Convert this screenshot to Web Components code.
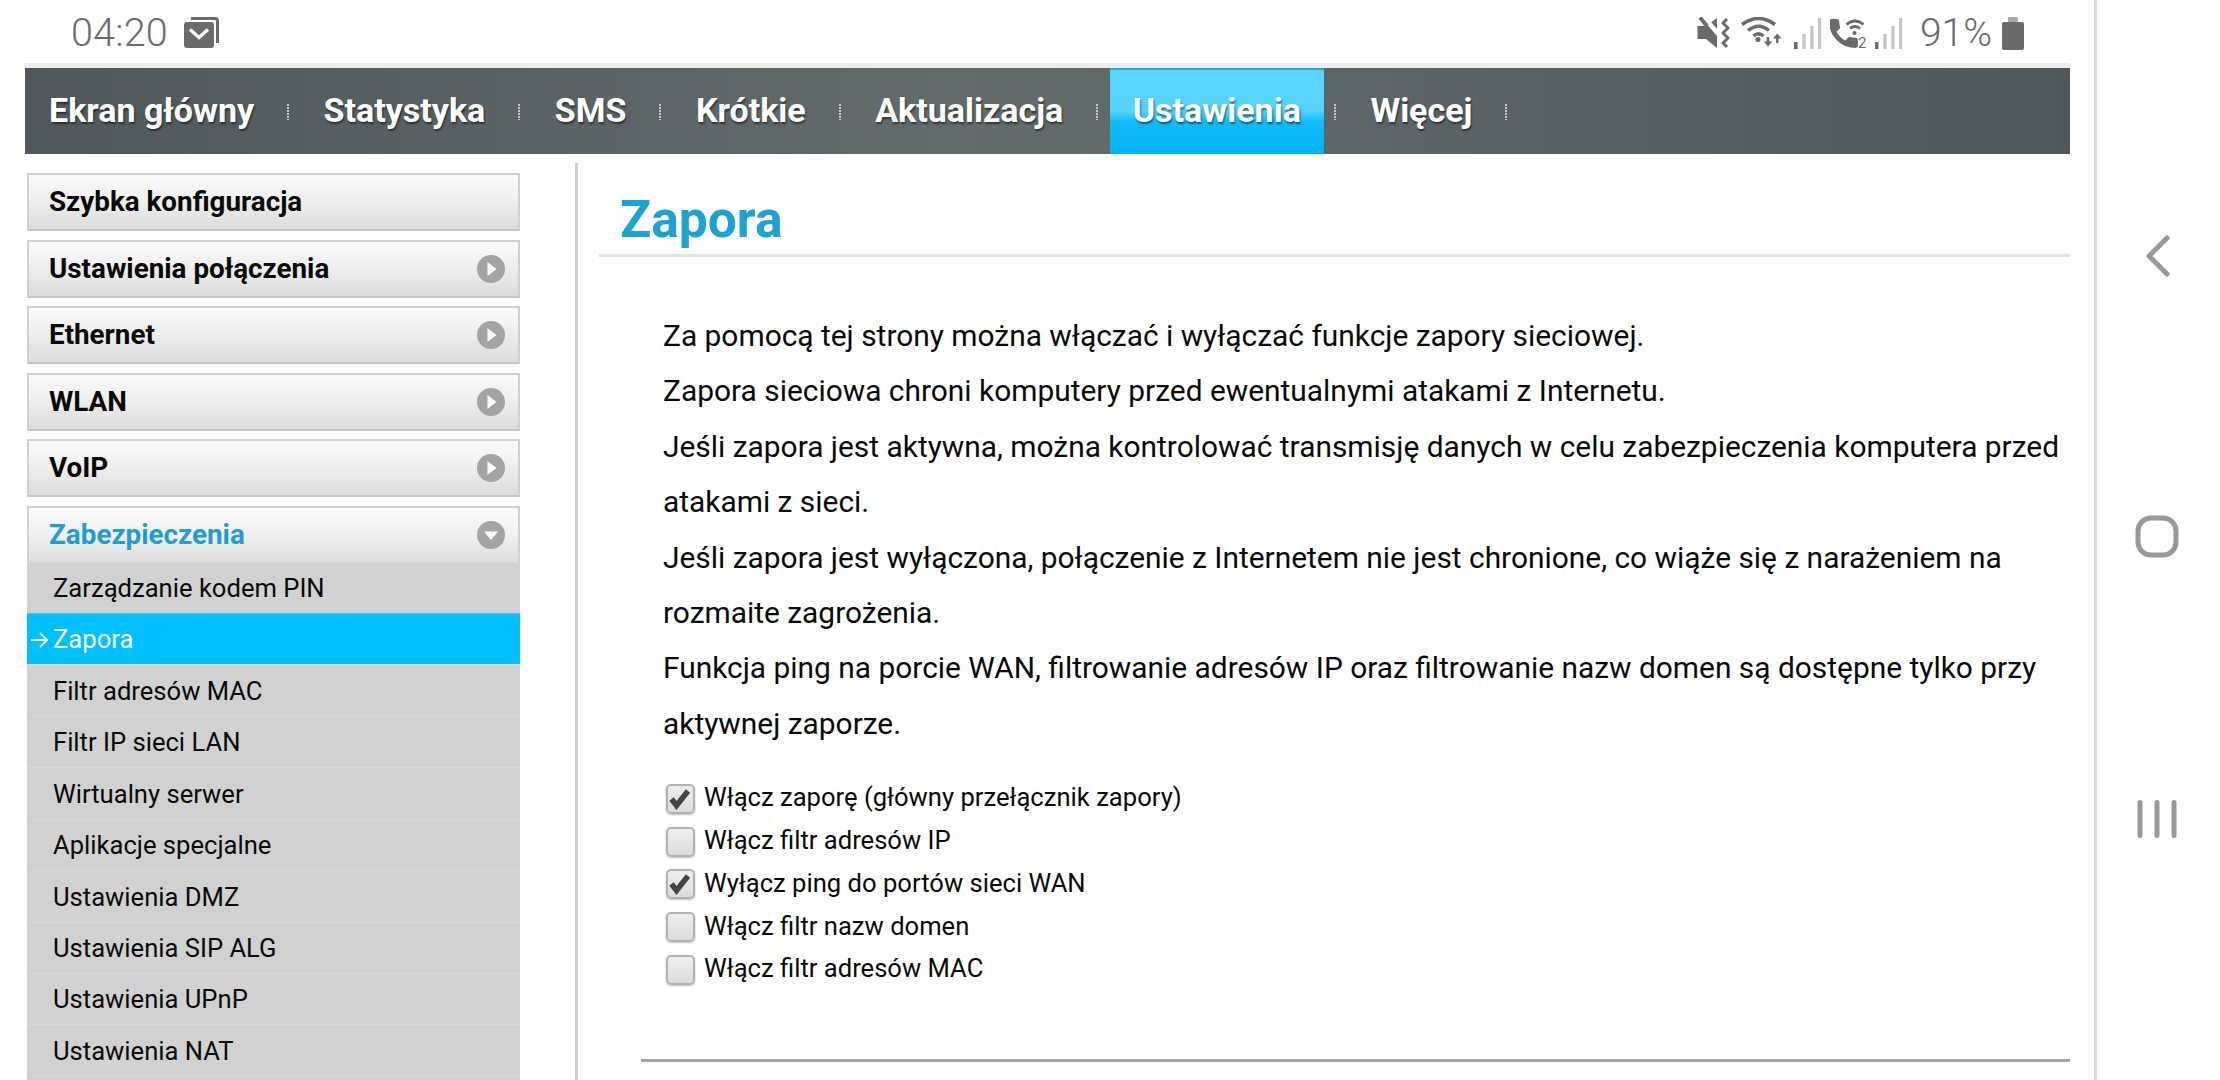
<!DOCTYPE html>
<html lang="pl"><head><meta charset="utf-8"><title>Zapora</title>
<style>
html,body{margin:0;padding:0;background:#fff;overflow:hidden}
body{font-family:Roboto,"Liberation Sans",sans-serif;width:2220px;height:1080px}
</style></head><body>
<phone-shell>
  <status-bar slot="status"></status-bar>
  <top-nav slot="nav">
    <nav-item>Ekran główny</nav-item>
    <nav-item>Statystyka</nav-item>
    <nav-item>SMS</nav-item>
    <nav-item>Krótkie</nav-item>
    <nav-item>Aktualizacja</nav-item>
    <nav-item active>Ustawienia</nav-item>
    <nav-item>Więcej</nav-item>
  </top-nav>
  <side-menu slot="side">
    <menu-button state="none">Szybka konfiguracja</menu-button>
    <menu-button>Ustawienia połączenia</menu-button>
    <menu-button>Ethernet</menu-button>
    <menu-button>WLAN</menu-button>
    <menu-button>VoIP</menu-button>
    <menu-group>
      <menu-button state="open">Zabezpieczenia</menu-button>
      <sub-item>Zarządzanie kodem PIN</sub-item>
      <sub-item active>Zapora</sub-item>
      <sub-item>Filtr adresów MAC</sub-item>
      <sub-item>Filtr IP sieci LAN</sub-item>
      <sub-item>Wirtualny serwer</sub-item>
      <sub-item>Aplikacje specjalne</sub-item>
      <sub-item>Ustawienia DMZ</sub-item>
      <sub-item>Ustawienia SIP ALG</sub-item>
      <sub-item>Ustawienia UPnP</sub-item>
      <sub-item>Ustawienia NAT</sub-item>
      <sub-item></sub-item>
    </menu-group>
  </side-menu>
  <firewall-panel slot="main">
    <span slot="title">Zapora</span>
    <p>Za pomocą tej strony można włączać i wyłączać funkcje zapory sieciowej.</p>
    <p>Zapora sieciowa chroni komputery przed ewentualnymi atakami z Internetu.</p>
    <p>Jeśli zapora jest aktywna, można kontrolować transmisję danych w celu zabezpieczenia komputera przed atakami z sieci.</p>
    <p>Jeśli zapora jest wyłączona, połączenie z Internetem nie jest chronione, co wiąże się z narażeniem na rozmaite zagrożenia.</p>
    <p>Funkcja ping na porcie WAN, filtrowanie adresów IP oraz filtrowanie nazw domen są dostępne tylko przy aktywnej zaporze.</p>
    <check-row slot="checks" checked>Włącz zaporę (główny przełącznik zapory)</check-row>
    <check-row slot="checks">Włącz filtr adresów IP</check-row>
    <check-row slot="checks" checked>Wyłącz ping do portów sieci WAN</check-row>
    <check-row slot="checks">Włącz filtr nazw domen</check-row>
    <check-row slot="checks">Włącz filtr adresów MAC</check-row>
  </firewall-panel>
  <nav-rail slot="rail"></nav-rail>
</phone-shell>
<script>
function def(name, html, setup){
  customElements.define(name, class extends HTMLElement{
    constructor(){super();const r=this.attachShadow({mode:'open'});r.innerHTML=html;}
    connectedCallback(){ if(setup) setup(this); }
  });
}
def('phone-shell',`<style>
:host{display:flex;width:2220px;height:1080px;overflow:hidden;background:#fff}
.left{width:2094px;flex:none;box-sizing:border-box;padding-left:25px;display:flex;flex-direction:column;height:1080px}
.inner{width:2045px;display:flex;flex:1;min-height:0;margin-top:9px}
.sidecol{width:553px;flex:none;box-sizing:border-box;border-right:3px solid #cfcfcf;padding-top:10px;overflow:hidden}
.maincol{flex:1;min-width:0}
.railcol{flex:1;border-left:3px solid #dcdcdc}
</style>
<div class="left"><slot name="status"></slot><slot name="nav"></slot>
<div class="inner"><div class="sidecol"><slot name="side"></slot></div><div class="maincol"><slot name="main"></slot></div></div></div>
<div class="railcol"><slot name="rail"></slot></div>`);

def('status-bar',`<style>
:host{display:flex;align-items:center;height:63px;box-sizing:border-box;padding:3px 0 0 46px;color:#6b6b6b}
.t{font:300 39.500px/1 Roboto,sans-serif;letter-spacing:.2px;margin-right:15px}
.sp{flex:1}
svg{display:block;flex:none}
.pct{font:300 39px/1 Roboto,sans-serif;margin:0 10px 0 17px}
.r{display:flex;align-items:center;padding-right:70px}
</style>
<span class="t">04:20</span>
<svg width="36" height="32" viewBox="0 0 36 32"><path d="M8 1.500h24a2.500 2.500 0 0 1 2.500 2.500v22" fill="none" stroke="#6b6b6b" stroke-width="3"/><rect x="1" y="5" width="30" height="26" rx="3" fill="#6b6b6b"/><path d="M7 12.500l9 8 9-8" fill="none" stroke="#fff" stroke-width="3.400"/></svg>
<span class="sp"></span>
<div class="r">
<svg width="33" height="33" viewBox="0 0 33 33" style="margin-right:11px"><path d="M.5 9H9L20 1V31L9 22H.5z" fill="#6b6b6b"/><path d="M6-1L23 19" stroke="#fff" stroke-width="4.500"/><path d="M3 .5L10 9" stroke="#6b6b6b" stroke-width="4"/><path d="M30 2l-4 4 5 5-5 5 5 5-5 5 4 4" fill="none" stroke="#6b6b6b" stroke-width="3" stroke-linejoin="round"/></svg>
<svg width="44" height="32" viewBox="0 0 44 32" style="margin-right:9px"><path d="M1 7.500Q17.500-4.500 34 7.500M7 13.500Q17.500 5 28 13.500M12.500 19Q17.500 14.500 22.500 19" fill="none" stroke="#6b6b6b" stroke-width="3.500"/><circle cx="17" cy="22.500" r="2.500" fill="#6b6b6b"/><path d="M27 20v5" stroke="#6b6b6b" stroke-width="2.500"/><path d="M22.800 24.500h8.400l-4.200 5z" fill="#6b6b6b"/><path d="M36.300 26v-6" stroke="#6b6b6b" stroke-width="2.500"/><path d="M32 21.500h8.600l-4.300-5z" fill="#6b6b6b"/></svg>
<svg width="28" height="31" viewBox="0 0 28 31" style="margin-right:8px"><rect x="0" y="24" width="3.500" height="7" fill="#6b6b6b"/><rect x="8.300" y="16" width="3.400" height="15" fill="#c6c6c6"/><rect x="16.300" y="8" width="3.200" height="23" fill="#c6c6c6"/><rect x="24" y="0" width="3.200" height="31" fill="#c6c6c6"/></svg>
<svg width="38" height="36" viewBox="0 0 38 36" style="margin:5px 7px 0 0"><g transform="translate(-4.500 -2.500) scale(1.500)"><path d="M6.620 10.790c1.440 2.830 3.760 5.140 6.590 6.590l2.200-2.200c.27-.27.67-.36 1.020-.24 1.120.37 2.330.57 3.570.57.550 0 1 .45 1 1V20c0 .55-.45 1-1 1-9.390 0-17-7.610-17-17 0-.55.45-1 1-1h3.500c.55 0 1 .45 1 1 0 1.250.2 2.450.57 3.570.11.35.03.74-.25 1.020l-2.200 2.200z" fill="#6b6b6b" stroke="#6b6b6b" stroke-width="1.200"/></g><path d="M16.500 6.500Q25-.5 33.500 6.500M20 10.500Q25 6.500 30 10.500" fill="none" stroke="#6b6b6b" stroke-width="2.800"/><circle cx="24.500" cy="15" r="2" fill="#6b6b6b"/><text x="28" y="29.500" font-family="Roboto,sans-serif" font-size="15" fill="#6b6b6b">2</text></svg>
<svg width="28" height="31" viewBox="0 0 28 31"><rect x="0" y="24" width="3.500" height="7" fill="#6b6b6b"/><rect x="8.300" y="16" width="3.400" height="15" fill="#c6c6c6"/><rect x="16.300" y="8" width="3.200" height="23" fill="#c6c6c6"/><rect x="24" y="0" width="3.200" height="31" fill="#c6c6c6"/></svg>
<span class="pct">91%</span>
<svg width="22" height="33" viewBox="0 0 22 33"><rect x="6" y="0" width="10" height="5" rx="1" fill="#a8a8a8"/><rect x="0" y="5" width="22" height="28" rx="2" fill="#6b6b6b"/></svg>
</div>`);

def('top-nav',`<style>
:host{display:flex;width:2044px;height:86px;box-sizing:content-box;border-top:5px solid #eceeee;background:linear-gradient(90deg,#4f595d 0%,#596366 25%,#626c6c 45%,#5c6668 65%,#4e585b 100%);padding-left:1px}
</style><slot></slot>`);

def('nav-item',`<style>
:host{display:flex;align-items:stretch;color:#fff;font:700 34px/1 Roboto,sans-serif;text-shadow:1px 2px 2px rgba(0,0,0,.5)}
.a{display:flex;align-items:center;padding:0 23px 2px;white-space:nowrap}
:host([active]) .a{background:linear-gradient(180deg,#5ad6ff 0%,#55d3ff 50%,#12bcf8 62%,#00b5f5 100%);box-shadow:inset 0 2px 1px rgba(0,110,160,.5);}
.s{width:2px;height:16px;margin:36px 11.500px 0 10px;background:repeating-linear-gradient(180deg,#c4c8c8 0 2px,transparent 2px 3px)}
</style><span class="a"><slot></slot></span><span class="s"></span>`);

def('side-menu',`<style>
:host{display:flex;flex-direction:column;gap:8.500px;width:493px;margin-left:2px}
</style><slot></slot>`);

def('menu-group',`<style>:host{display:flex;flex-direction:column}</style><slot></slot>`);

def('menu-button',`<style>
:host{display:flex;align-items:center;justify-content:space-between;height:58px;box-sizing:border-box;padding:0 13px 0 20px;border:2px solid #d0d0d0;border-bottom-color:#c4c4c4;background:linear-gradient(180deg,#fbfbfb 0%,#efefef 45%,#dcdcdc 100%);font:700 27.800px/1 Roboto,sans-serif;color:#0a0a0a;white-space:nowrap}
:host([state="open"]){color:#1e9fd0;border-bottom:0;height:56px;background:linear-gradient(180deg,#fbfbfb 0%,#f0f0f0 50%,#dedede 100%)}
svg{display:block;flex:none}
</style><slot></slot><svg id="i" width="28" height="28" viewBox="0 0 28 28"><circle cx="14" cy="14" r="14" fill="#a4a4a4"/><path id="p" d="M10.500 7l9 7-9 7z" fill="#fff"/></svg>`,(el)=>{
  const s=el.getAttribute('state');
  if(s==='none') el.shadowRoot.getElementById('i').style.display='none';
  if(s==='open') el.shadowRoot.getElementById('p').setAttribute('d','M7 10.500h14l-7 8.500z');
});

def('sub-item',`<style>
:host{display:flex;align-items:center;height:51.450px;box-sizing:border-box;border-top:1px solid #d9d9d9;background:#d1d1d1;padding:2px 0 0 26px;font:400 25.600px/1 Roboto,sans-serif;color:#0a0a0a;position:relative;white-space:nowrap}
:host([active]){background:#00c0ff;color:#fff;border-top-color:#3fd0ff}
svg{display:none;position:absolute;left:3px;top:17px}
:host([active]) svg{display:block}
</style><svg width="19" height="18" viewBox="0 0 19 18"><path d="M1 9h16M10 2l7 7-7 7" fill="none" stroke="#fff" stroke-width="1.800"/></svg><slot></slot>`);

def('firewall-panel',`<style>
:host{display:block;color:#0a0a0a}
.h{margin-left:21px;height:94px;box-sizing:border-box;border-bottom:3px solid #e2e2e2;padding:22px 0 0 21px;display:flex;align-items:center;font:700 51.500px/1 Roboto,sans-serif;color:#1ea2d0}
.txt{margin:51px 0 0 85px;font:400 29.900px/55.400px Roboto,sans-serif}
.checks{margin:25px 0 0 85px;display:flex;flex-direction:column}
.hr{margin:68px 0 0 63px;height:3px;background:#a4a4a4}
::slotted(p){margin:0}
</style><div class="h"><slot name="title"></slot></div><div class="txt"><slot></slot></div><div class="checks"><slot name="checks"></slot></div><div class="hr"></div>`);

def('check-row',`<style>
:host{display:flex;align-items:center;height:42.900px;font:400 25.600px/1 Roboto,sans-serif;color:#0a0a0a;white-space:nowrap}
.b{width:29px;height:30px;margin:0 9px 0 3px;box-sizing:border-box;border:2.500px solid #b2b2b2;border-radius:5px;background:linear-gradient(180deg,#eeeeee,#dcdcdc);box-shadow:0 1px 2px rgba(0,0,0,.25);flex:none;display:block;position:relative;top:1px}
svg{display:none;width:24px;height:25px}
:host([checked]) svg{display:block}
</style><span class="b"><svg viewBox="0 0 24 25"><path d="M3.500 13l5 6.500L20 5" fill="none" stroke="#444" stroke-width="5.500"/></svg></span><slot></slot>`);

def('nav-rail',`<style>
:host{display:block;position:relative;height:1080px}
svg{position:absolute;left:48px}
</style>
<svg style="top:235px" width="26" height="42" viewBox="0 0 26 42"><path d="M22 3L4 21l18 18" fill="none" stroke="#999" stroke-width="5" stroke-linecap="round" stroke-linejoin="round"/></svg>
<svg style="left:38px;top:515px" width="44" height="43" viewBox="0 0 44 43"><rect x="3" y="3" width="38" height="37" rx="13" fill="none" stroke="#999" stroke-width="5"/></svg>
<svg style="left:40px;top:800px" width="40" height="38" viewBox="0 0 40 38"><path d="M3 2.500v33M20 2.500v33M37 2.500v33" stroke="#999" stroke-width="5" stroke-linecap="round"/></svg>`);
</script>
</body></html>
